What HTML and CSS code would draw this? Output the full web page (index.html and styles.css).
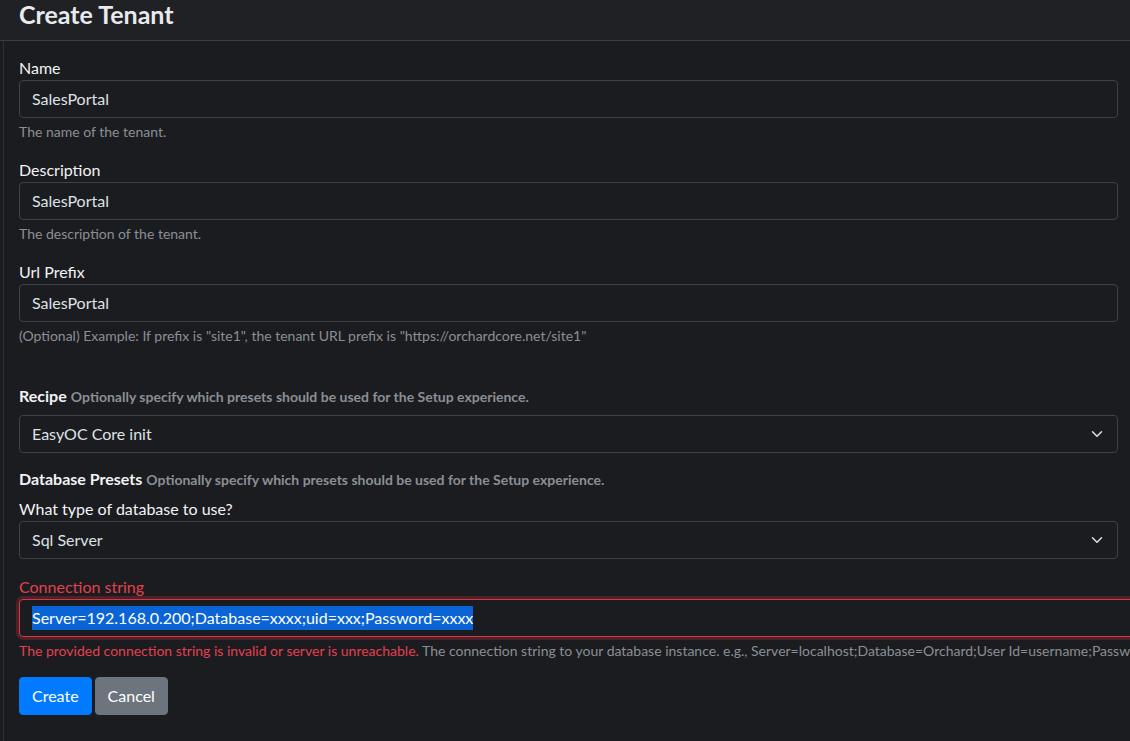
FILE: index.html
```html
<!DOCTYPE html>
<html lang="en">
<head>
<meta charset="utf-8">
<title>Create Tenant</title>
<link rel="stylesheet" href="styles.css">
</head>
<body>
<header class="page-header">
  <h1 class="title">Create Tenant</h1>
</header>
<main class="content">
  <form class="form">
    <div class="group">
      <label class="label">Name</label>
      <div class="input">SalesPortal</div>
      <div class="help">The name of the tenant.</div>
    </div>
    <div class="group">
      <label class="label">Description</label>
      <div class="input">SalesPortal</div>
      <div class="help">The description of the tenant.</div>
    </div>
    <div class="group">
      <label class="label">Url Prefix</label>
      <div class="input">SalesPortal</div>
      <div class="help">(Optional) Example: If prefix is "site1", the tenant URL prefix is "https://orchardcore.net/site1"</div>
    </div>

    <div class="section recipe">
      <div class="section-label"><strong>Recipe</strong> <span class="hint">Optionally specify which presets should be used for the Setup experience.</span></div>
      <div class="input select"><span>EasyOC Core init</span>
        <svg class="chevron" viewBox="0 0 16 16" width="16" height="12"><path d="m2 5 6 6 6-6" fill="none" stroke="#dee2e6" stroke-width="2" stroke-linecap="round" stroke-linejoin="round"/></svg>
      </div>
    </div>

    <div class="section presets">
      <div class="section-label presets-label"><strong>Database Presets</strong> <span class="hint">Optionally specify which presets should be used for the Setup experience.</span></div>
      <label class="label">What type of database to use?</label>
      <div class="input select"><span>Sql Server</span>
        <svg class="chevron" viewBox="0 0 16 16" width="16" height="12"><path d="m2 5 6 6 6-6" fill="none" stroke="#dee2e6" stroke-width="2" stroke-linecap="round" stroke-linejoin="round"/></svg>
      </div>
    </div>

    <div class="group wide">
      <label class="label invalid-label">Connection string</label>
      <div class="input invalid"><span class="selected">Server=192.168.0.200;Database=xxxx;uid=xxx;Password=xxxx</span></div>
      <div class="help nowrap"><span class="error">The provided connection string is invalid or server is unreachable.</span> The connection string to your database instance. e.g., Server=localhost;Database=Orchard;User Id=username;Password=password</div>
    </div>

    <div class="actions">
      <button type="button" class="btn btn-primary">Create</button>
      <button type="button" class="btn btn-secondary">Cancel</button>
    </div>
  </form>
</main>
</body>
</html>
```

FILE: styles.css
```css
html, body {
  margin: 0;
  padding: 0;
}
body {
  background: #1b1c1f;
  color: #e9ecef;
  font-family: Lato, "Noto Sans", "Liberation Sans", sans-serif;
  font-size: 16px;
  line-height: 1.5;
  width: 1130px;
  height: 741px;
  overflow: hidden;
}
.page-header {
  height: 40px;
  background: #1f2124;
  border-bottom: 1px solid #3a3d41;
  padding: 0 19px;
}
.title {
  margin: 0;
  font-size: 25px;
  line-height: 28px;
  font-weight: 700;
  color: #e8eaed;
}
.content {
  box-sizing: border-box;
  margin-left: 3px;
  border-left: 1px solid #2e3034;
  padding: 15px 11px 0 15px;
  height: 700px;
}
.form {
  width: 1099px;
}
.group {
  margin-bottom: 16px;
}
.label {
  display: block;
  line-height: 24px;
  color: #f1f3f5;
}
.input {
  box-sizing: border-box;
  height: 38px;
  border: 1px solid #3e4145;
  border-radius: 4px;
  padding: 0 12px;
  display: flex;
  align-items: center;
  color: #dee2e6;
  background: #1b1c1f;
}
.select {
  justify-content: space-between;
  padding-right: 12px;
}
.chevron {
  display: block;
}
.help {
  margin-top: 4px;
  font-size: 14px;
  line-height: 20px;
  color: #8a8f95;
}
.nowrap {
  white-space: nowrap;
}
.section-label {
  line-height: 24px;
  color: #f1f3f5;
  margin-bottom: 6px;
}
.section-label strong {
  font-weight: 700;
}
.hint {
  font-size: 14px;
  font-weight: 700;
  color: #8a8f95;
}
.recipe {
  margin-top: 38px;
  margin-bottom: 14px;
}
.presets {
  margin-bottom: 16px;
}
.presets-label {
  margin-bottom: 5px;
}
.wide {
  width: max-content;
  min-width: 1099px;
}
.invalid-label {
  color: #e3404f;
}
.invalid {
  border-color: #dc3545;
  box-shadow: 0 0 0 3px rgba(220, 53, 69, 0.25);
}
.selected {
  background: #0a64d6;
  color: #ffffff;
  line-height: 24px;
}
.error {
  color: #e3404f;
}
.actions {
  display: flex;
  gap: 3px;
}
.btn {
  font-family: inherit;
  font-size: 16px;
  line-height: 24px;
  padding: 6px 12px;
  border: 1px solid transparent;
  border-radius: 4px;
  color: #ffffff;
  cursor: pointer;
}
.btn-primary {
  background: #007bff;
  border-color: #007bff;
}
.btn-secondary {
  background: #6c757d;
  border-color: #6c757d;
}
```
